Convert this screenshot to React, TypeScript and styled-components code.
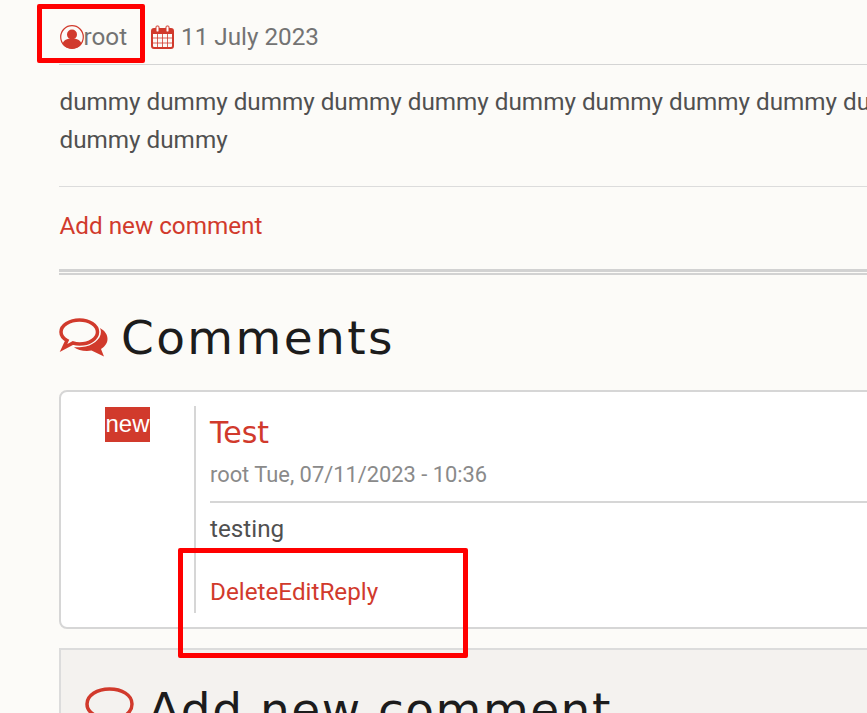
import React from "react";
import styled, { createGlobalStyle } from "styled-components";

const RED = "#d13a2c";

const Global = createGlobalStyle`
  html, body { margin: 0; padding: 0; background: #fcfbf8; }
  body { font-family: Roboto, "Liberation Sans", sans-serif; color: #505050; }
`;

const Page = styled.div`
  position: relative;
  width: 867px;
  height: 713px;
  overflow: hidden;
`;

const Content = styled.div`
  width: 1100px;
  margin-left: 59px;
`;

const Meta = styled.div`
  display: flex;
  align-items: center;
  height: 65px;
  padding: 10px 0 0 0.5px;
  box-sizing: border-box;
  border-bottom: 1px solid #d4d4d4;
  font-size: 24.25px;
  color: #737373;
`;

const MetaItem = styled.span<{ $gap?: number }>`
  display: flex;
  align-items: center;
  margin-right: ${(p) => p.$gap ?? 0}px;
`;

const Body = styled.div`
  padding: 18px 0 27px 0.5px;
  font-size: 24.25px;
  line-height: 38px;
  border-bottom: 1px solid #dcdcdc;
`;

const BodyLine = styled.div`
  white-space: nowrap;
`;

const AddLink = styled.a`
  display: block;
  padding: 23px 0 27px 0.5px;
  font-size: 24.25px;
  line-height: 32px;
  color: ${RED};
`;

const DoubleRule = styled.div`
  height: 1px;
  border-top: 3px solid #d2d2d2;
  border-bottom: 2px solid #d2d2d2;
`;

const Title = styled.h2`
  display: flex;
  align-items: center;
  gap: 13px;
  margin: 0;
  height: 115px;
  padding-top: 10px;
  box-sizing: border-box;
  font-family: "DejaVu Sans", sans-serif;
  font-weight: 400;
  font-size: 47px;
  letter-spacing: 2.4px;
  color: #1c1c1c;
`;

const Card = styled.div`
  display: flex;
  box-sizing: border-box;
  height: 239px;
  width: 1100px;
  padding: 14px 0;
  background: #fff;
  border: 2px solid #d6d6d6;
  border-radius: 8px;
`;

const Side = styled.div`
  width: 133px;
  flex: none;
  padding: 1px 0 0 44px;
  box-sizing: border-box;
`;

const Badge = styled.span`
  display: block;
  width: 45px;
  height: 35px;
  background: ${RED};
  color: #fff;
  font-family: "Liberation Sans", sans-serif;
  font-size: 24px;
  line-height: 34px;
  text-align: center;
`;

const Main = styled.div`
  flex: 1;
  border-left: 2px solid #d6d6d6;
  padding-left: 14px;
`;

const CommentTitle = styled.div`
  font-family: "DejaVu Sans", sans-serif;
  font-size: 30px;
  line-height: 53px;
  color: ${RED};
`;

const Submitted = styled.div`
  font-size: 21.85px;
  line-height: 32px;
  padding: 0 0 10px;
  color: #8a8a8a;
  border-bottom: 2px solid #d6d6d6;
`;

const CommentBody = styled.div`
  font-size: 24.25px;
  line-height: 32px;
  padding-top: 10px;
`;

const Actions = styled.div`
  font-size: 24.25px;
  line-height: 32px;
  padding-top: 31px;
  color: ${RED};
`;

const Form = styled.div`
  margin-top: 19px;
  height: 200px;
  box-sizing: border-box;
  background: #f4f2ef;
  border: 2px solid #dcdcdc;
  padding: 32px 0 0 24px;
`;

const FormTitle = styled(Title)`
  height: auto;
  padding-top: 0;
  gap: 14px;
  letter-spacing: 1.5px;
  line-height: 56px;
`;

const Annotation = styled.div<{ $w: number; $h: number; $x: number; $y: number }>`
  position: absolute;
  box-sizing: border-box;
  left: ${(p) => p.$x}px;
  top: ${(p) => p.$y}px;
  width: ${(p) => p.$w}px;
  height: ${(p) => p.$h}px;
  border: 5px solid #ff0000;
  border-radius: 2px;
`;

const UserIcon = () => (
  <svg width="24" height="24" viewBox="0 0 24 24">
    <circle cx="12" cy="12" r="11.300" fill="none" stroke={RED} strokeWidth="1.200" />
    <circle cx="12" cy="9.500" r="5" fill={RED} />
    <path d="M2.500 19c1-4 4.500-5.500 9.500-5.500s8.500 1.500 9.500 5.500C19.500 22 16 23.600 12 23.600s-7.500-1.600-9.500-4.600z" fill={RED} />
  </svg>
);

const CalendarIcon = () => (
  <svg width="23" height="24" viewBox="0 0 23 24" style={{ marginRight: 7 }}>
    <rect x="1" y="4" width="21" height="19" rx="2" fill="none" stroke={RED} strokeWidth="2" />
    <rect x="1" y="4" width="21" height="5" fill={RED} />
    <rect x="5" y="1" width="3" height="6" rx="1" fill="#fff" stroke={RED} strokeWidth="1" />
    <rect x="15" y="1" width="3" height="6" rx="1" fill="#fff" stroke={RED} strokeWidth="1" />
    <path d="M1 13h21M1 18h21M6.500 9v14M11.500 9v14M16.500 9v14" stroke={RED} strokeWidth="0.800" fill="none" />
  </svg>
);

const CommentsIcon = () => (
  <svg width="49" height="39" viewBox="0 0 49 39">
    <path
      d="M20.500 2C10.500 2 2 7.500 2 14c0 3.500 2.500 6.500 6 8.500L4.500 30l9.500-5c2 .6 4.300 1 6.500 1C30.500 26 38.500 20.500 38.500 14S30.500 2 20.500 2z"
      fill="none"
      stroke={RED}
      strokeWidth="3.500"
    />
    <path
      d="M41 10c.6 1.300.9 2.600.9 3.900 0 7.600-8.500 14-19 15.200-2.800.3-5.500.3-8 .1C18 31.500 22.500 33 28 33c1.500 0 3-.1 4.500-.4L45 38.500l-3-7.500c4-2.500 6.500-6 6.500-10 0-4.500-2.500-8-7.500-11z"
      fill={RED}
    />
  </svg>
);

const BubbleIcon = () => (
  <svg width="49" height="46" viewBox="0 0 49 46">
    <path
      d="M24.500 2C12 2 2 8.500 2 17c0 4.500 3 8.500 7.500 11L5 38l11-6c2.700.7 5.500 1 8.500 1C37 33 47 26 47 17S37 2 24.500 2z"
      fill="none"
      stroke={RED}
      strokeWidth="3.500"
    />
  </svg>
);

export default function App() {
  return (
    <Page>
      <Global />
      <Content>
        <Meta>
          <MetaItem $gap={24}>
            <UserIcon />
            root
          </MetaItem>
          <MetaItem>
            <CalendarIcon />
            11 July 2023
          </MetaItem>
        </Meta>
        <Body>
          <BodyLine>dummy dummy dummy dummy dummy dummy dummy dummy dummy dummy dummy</BodyLine>
          <BodyLine>dummy dummy</BodyLine>
        </Body>
        <AddLink>Add new comment</AddLink>
        <DoubleRule />
        <Title>
          <CommentsIcon />
          Comments
        </Title>
        <Card>
          <Side>
            <Badge>new</Badge>
          </Side>
          <Main>
            <CommentTitle>Test</CommentTitle>
            <Submitted>root Tue, 07/11/2023 - 10:36</Submitted>
            <CommentBody>testing</CommentBody>
            <Actions>DeleteEditReply</Actions>
          </Main>
        </Card>
        <Form>
          <FormTitle>
            <BubbleIcon />
            Add new comment
          </FormTitle>
        </Form>
      </Content>
      <Annotation $x={37} $y={4} $w={108} $h={59} />
      <Annotation $x={178} $y={548} $w={290} $h={110} />
    </Page>
  );
}
